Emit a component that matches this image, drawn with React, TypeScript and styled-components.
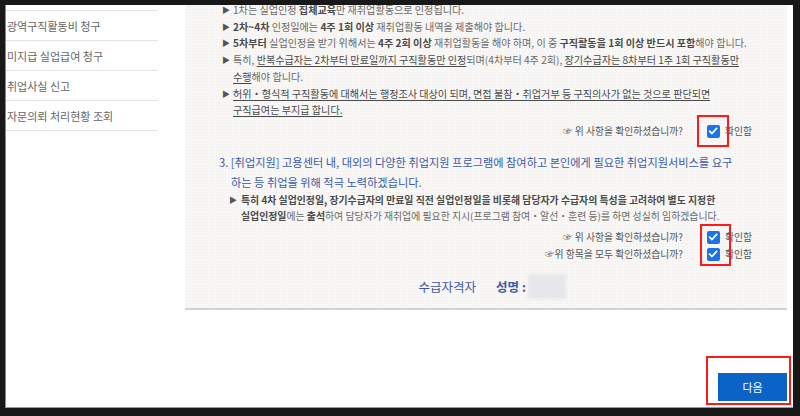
import React from 'react';
import styled, { createGlobalStyle } from 'styled-components';

//global
const GlobalStyle = createGlobalStyle`
  html, body {
    margin: 0;
    padding: 0;
    background-color: #181818;
  }
  body {
    font-family: "Noto Sans CJK KR", "Noto Sans", sans-serif;
  }
`;

const colors = {
  text: '#6a6a6a',
  strong: '#4a4a4a',
  blue: '#3a5aa6',
  check: '#1a73e8',
  red: '#ff1a1a',
  line: '#e4e4e4',
  panel: '#f8f7f5',
};

//styled
const Frame = styled.div`
  margin: 5px 0 0 5px;
  width: 788px;
  height: 403px;
  background-color: #fff;
  border-left: 1px solid #8a8a8a;
  border-bottom: 1px solid #9a9a9a;
  box-sizing: border-box;
  display: flex;
  overflow: hidden;
`;

const Sidebar = styled.ul`
  list-style: none;
  margin: 5px 0 0;
  padding: 0;
  width: 152px;
  flex-shrink: 0;
  border-top: 1px solid ${colors.line};
  align-self: flex-start;
`;

const SideItem = styled.li`
  height: 29px;
  display: flex;
  align-items: center;
  padding-left: 1px;
  border-bottom: 1px solid ${colors.line};
  font-size: 11px;
  color: #666;
`;

const Main = styled.div`
  margin-left: 27px;
  width: 602px;
  display: flex;
  flex-direction: column;
`;

const Panel = styled.section`
  height: 305px;
  box-sizing: border-box;
  background-color: ${colors.panel};
  background-image: radial-gradient(#efede9 0.6px, transparent 0.7px);
  background-size: 3px 3px;
  border-bottom: 2px solid #d2d2d2;
  overflow: hidden;
`;

const NoticeList = styled.ul<{ $left: number; $lh: number; $size: number }>`
  list-style: none;
  margin: 0;
  padding: 0 0 0 ${(p) => p.$left}px;
  font-size: ${(p) => p.$size}px;
  line-height: ${(p) => p.$lh}px;
  color: ${colors.text};
  white-space: nowrap;
`;

const TopList = styled(NoticeList)`
  margin-top: -3px;
`;

const Item = styled.li<{ $mark: number }>`
  display: flex;
  &::before {
    content: "▶";
    flex: 0 0 ${(p) => p.$mark}px;
    font-size: 8px;
    color: #555;
  }
`;

const ItemText = styled.span`
  display: block;
`;

const B = styled.b`
  font-weight: 700;
  color: ${colors.strong};
`;

const U = styled.span`
  text-decoration: underline;
  text-underline-offset: 2px;
  color: ${colors.strong};
`;

const CheckRow = styled.div`
  display: flex;
  align-items: center;
  justify-content: flex-end;
  height: 17px;
  padding-right: 35px;
  font-size: 9.8px;
  color: #555;
  white-space: nowrap;
`;

const Question = styled.span`
  margin-right: 24px;
`;

const CheckBox = styled.span`
  width: 13px;
  height: 13px;
  border-radius: 2px;
  background-color: ${colors.check};
  display: inline-flex;
  align-items: center;
  justify-content: center;
  margin-right: 5px;
`;

const CheckLabel = styled.span`
  min-width: 27px;
`;

const CheckGroup = styled.div<{ $top: number }>`
  position: relative;
  padding-top: ${(p) => p.$top}px;
`;

const RedMark = styled.div<{ $top: number; $right: number; $w: number; $h: number }>`
  position: absolute;
  top: ${(p) => p.$top}px;
  right: ${(p) => p.$right}px;
  width: ${(p) => p.$w}px;
  height: ${(p) => p.$h}px;
  border: 2px solid ${colors.red};
  box-sizing: border-box;
  pointer-events: none;
`;

const Pledge = styled.h3`
  margin: 12px 0 0;
  padding: 0 0 0 46px;
  text-indent: -12px;
  font-size: 11.2px;
  font-weight: 400;
  line-height: 20px;
  color: ${colors.blue};
  white-space: nowrap;
`;

const Signature = styled.div`
  display: flex;
  align-items: center;
  justify-content: flex-end;
  margin-top: 11px;
  padding-right: 221px;
  height: 26px;
  font-size: 12.5px;
  color: ${colors.blue};
`;

const SignRole = styled.span`
  margin-right: 20px;
`;

const SignName = styled.b`
  font-weight: 700;
  margin-right: 2px;
`;

const Blurred = styled.span`
  width: 38px;
  height: 25px;
  background-color: #e6e6ec;
  filter: blur(1.5px);
`;

const Footer = styled.div`
  display: flex;
  justify-content: flex-end;
  margin-top: 63px;
`;

const ButtonWrap = styled.div`
  position: relative;
`;

const NextButton = styled.button`
  width: 69px;
  height: 28px;
  border: 0;
  padding: 0;
  background-color: #0b63c6;
  color: #fff;
  font-family: inherit;
  font-size: 11px;
  cursor: pointer;
`;

const Tick = () => (
  <svg width="10" height="10" viewBox="0 0 10 10">
    <path d="M1.6 5.2 L4 7.5 L8.6 2.4" fill="none" stroke="#fff" strokeWidth="1.8" strokeLinecap="round" strokeLinejoin="round" />
  </svg>
);

interface CheckProps {
  question: string;
}

const Check: React.FC<CheckProps> = ({ question }) => (
  <CheckRow>
    <Question>{question}</Question>
    <CheckBox>
      <Tick />
    </CheckBox>
    <CheckLabel>확인함</CheckLabel>
  </CheckRow>
);

interface NoticeProps {
  mark?: number;
  children: React.ReactNode;
}

const Notice: React.FC<NoticeProps> = ({ mark = 11, children }) => (
  <Item $mark={mark}>
    <ItemText>{children}</ItemText>
  </Item>
);

const menu = ['광역구직활동비 청구', '미지급 실업급여 청구', '취업사실 신고', '자문의뢰 처리현황 조회'];

const App: React.FC = () => {
  return (
    <>
      <GlobalStyle />
      <Frame>
        <Sidebar>
          {menu.map((m) => (
            <SideItem key={m}>{m}</SideItem>
          ))}
        </Sidebar>
        <Main>
          <Panel>
            <TopList $left={37} $lh={16.7} $size={10.1}>
              <Notice>
                1차는 실업인정 <B>집체교육</B>만 재취업활동으로 인정됩니다.
              </Notice>
              <Notice>
                <B>2차~4차</B> 인정일에는 <B>4주 1회 이상</B> 재취업활동 내역을 제출해야 합니다.
              </Notice>
              <Notice>
                <B>5차부터</B> 실업인정을 받기 위해서는 <B>4주 2회 이상</B> 재취업활동을 해야 하며, 이 중{' '}
                <B>구직활동을 1회 이상 반드시 포함</B>해야 합니다.
              </Notice>
              <Notice>
                특히, <U>반복수급자는 2차부터 만료일까지 구직활동만 인정</U>되며(4차부터 4주 2회),{' '}
                <U>장기수급자는 8차부터 1주 1회 구직활동만</U>
                <br />
                <U>수행</U>해야 합니다.
              </Notice>
              <Notice>
                <U>허위・형식적 구직활동에 대해서는 행정조사 대상이 되며, 면접 불참・취업거부 등 구직의사가 없는 것으로 판단되면</U>
                <br />
                <U>구직급여는 부지급 합니다.</U>
              </Notice>
            </TopList>

            <CheckGroup $top={4}>
              <Check question="☞ 위 사항을 확인하셨습니까?" />
              <RedMark $top={-4} $right={58} $w={32} $h={32} />
            </CheckGroup>

            <Pledge>
              3. [취업지원] 고용센터 내, 대외의 다양한 취업지원 프로그램에 참여하고 본인에게 필요한 취업지원서비스를 요구
              <br />
              하는 등 취업을 위해 적극 노력하겠습니다.
            </Pledge>
            <NoticeList $left={44} $lh={16} $size={9.9}>
              <Notice mark={12}>
                <B>특히 4차 실업인정일, 장기수급자의 만료일 직전 실업인정일을 비롯해 담당자가 수급자의 특성을 고려하여 별도 지정한</B>
                <br />
                <B>실업인정일</B>에는 <B>출석</B>하여 담당자가 재취업에 필요한 지시(프로그램 참여・알선・훈련 등)를 하면 성실히
                임하겠습니다.
              </Notice>
            </NoticeList>

            <CheckGroup $top={5}>
              <Check question="☞ 위 사항을 확인하셨습니까?" />
              <Check question="☞위 항목을 모두 확인하셨습니까?" />
              <RedMark $top={0} $right={56} $w={31} $h={42} />
            </CheckGroup>

            <Signature>
              <SignRole>수급자격자</SignRole>
              <SignName>성명 :</SignName>
              <Blurred />
            </Signature>
          </Panel>
          <Footer>
            <ButtonWrap>
              <NextButton>다음</NextButton>
              <RedMark $top={-17} $right={-4} $w={85} $h={49} />
            </ButtonWrap>
          </Footer>
        </Main>
      </Frame>
    </>
  );
};

export default App;
